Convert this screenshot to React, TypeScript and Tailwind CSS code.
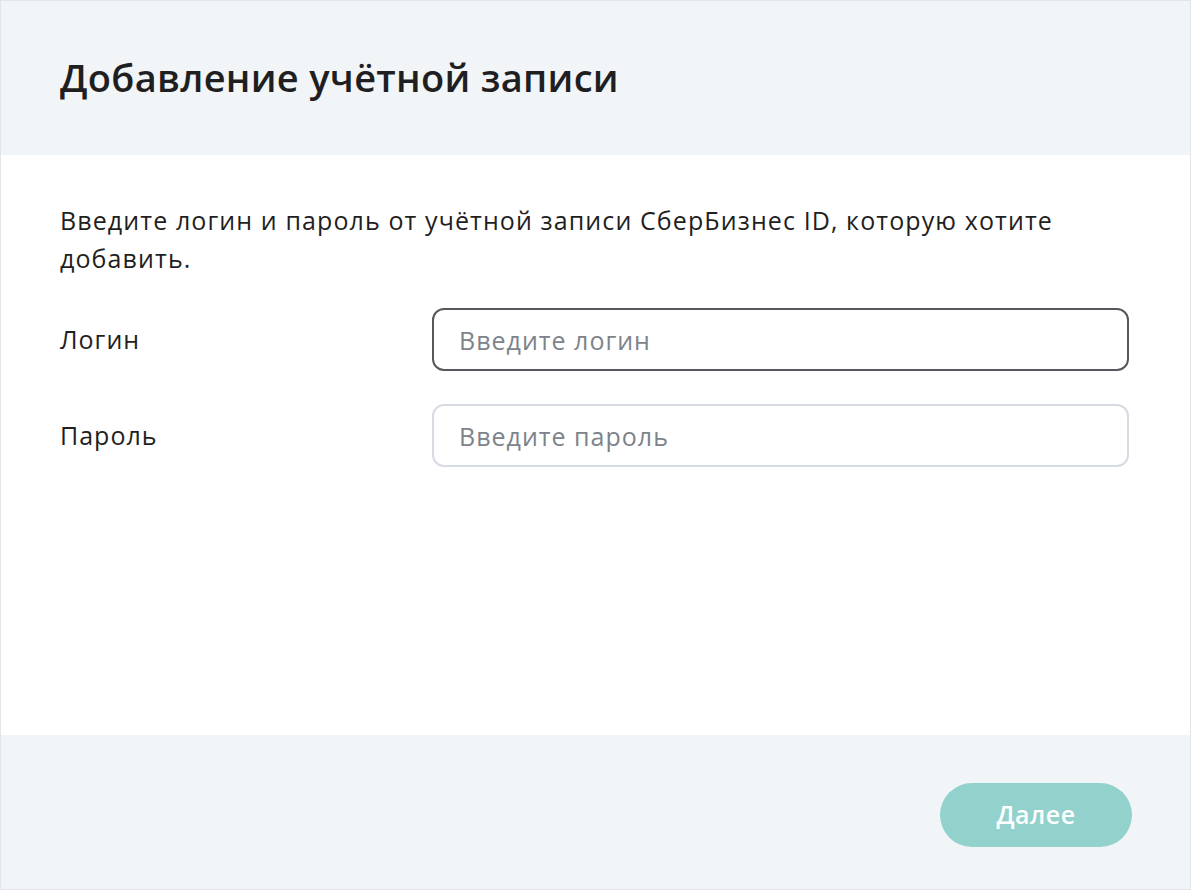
export default function App() {
  return (
    <div className="w-[1191px] h-[890px] border border-[#e2e5e9] flex flex-col bg-white text-[#1f1f22] font-['Open_Sans','Noto_Sans',sans-serif]">
      <div className="h-[154px] shrink-0 bg-[#f2f5f8] flex items-center px-[59px] pb-[2px]">
        <h1 className="text-[38px] font-semibold tracking-[0.3px] text-[#1f1f22]">
          Добавление учётной записи
        </h1>
      </div>

      <div className="flex-1 px-[59px] pt-[46px]">
        <p className="text-[25px] leading-[38px] tracking-[1.1px] text-[#1f1f22] max-w-[1030px]">
          Введите логин и пароль от учётной записи СберБизнес ID, которую хотите добавить.
        </p>

        <div className="mt-[31px] flex flex-col gap-[33px]">
          <div className="flex items-center">
            <label className="w-[372px] text-[25px] tracking-[1px]">Логин</label>
            <input
              className="w-[697px] h-[63px] rounded-[12px] border-2 border-[#55585d] px-[25px] text-[25px] tracking-[1px] outline-none placeholder:text-[#7d838a]"
              placeholder="Введите логин"
            />
          </div>
          <div className="flex items-center">
            <label className="w-[372px] text-[25px] tracking-[1px]">Пароль</label>
            <input
              type="password"
              className="w-[697px] h-[63px] rounded-[12px] border-2 border-[#d6dce2] px-[25px] text-[25px] tracking-[1px] outline-none placeholder:text-[#7d838a]"
              placeholder="Введите пароль"
            />
          </div>
        </div>
      </div>

      <div className="h-[154px] shrink-0 bg-[#f2f5f8] flex items-center justify-end px-[58px] pt-[6px]">
        <button className="w-[192px] h-[64px] rounded-full bg-[#93d1cd] text-white text-[25px] tracking-[0.5px] font-semibold">
          Далее
        </button>
      </div>
    </div>
  );
}
